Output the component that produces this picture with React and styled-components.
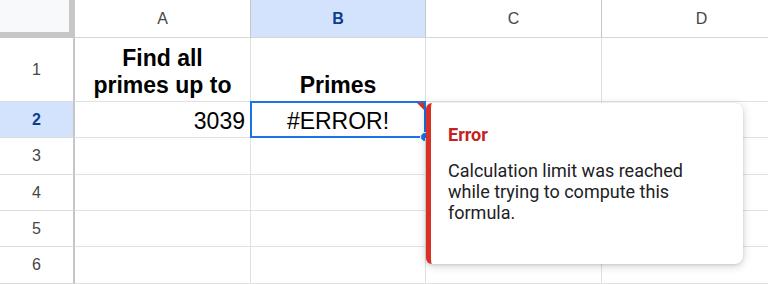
import React from 'react';
import styled, { createGlobalStyle } from 'styled-components';

const GlobalStyle = createGlobalStyle`
  html, body {
    margin: 0;
    padding: 0;
    background: #ffffff;
    overflow: hidden;
  }
`;

const Sheet = styled.div`
  position: relative;
  display: grid;
  grid-template-columns: 75px 176px 175px 176px 200px;
  grid-template-rows: 38px 64px 36px 37px 36px 36px 37px;
  width: 802px;
  font-family: "Liberation Sans", Arial, sans-serif;
`;

const Corner = styled.div`
  box-sizing: border-box;
  background: #f8f9fa;
  border-right: 6px solid #c7c7c7;
  border-bottom: 6px solid #c7c7c7;
`;

const ColHead = styled.div`
  box-sizing: border-box;
  display: flex;
  align-items: center;
  justify-content: center;
  font-size: 16px;
  color: ${p => (p.$active ? '#0b3d91' : '#444746')};
  font-weight: ${p => (p.$active ? 700 : 400)};
  background: ${p => (p.$active ? '#d3e3fd' : '#ffffff')};
  border-right: 1px solid #c4c7c5;
  border-bottom: 1px solid #d5d7d6;
`;

const RowHead = styled(ColHead)`
  border-right: 2px solid #c4c7c5;
  border-bottom: 1px solid #dcdcdc;
`;

const Cell = styled.div`
  position: relative;
  box-sizing: border-box;
  display: flex;
  align-items: flex-end;
  justify-content: ${p => (p.$align === 'right' ? 'flex-end' : 'center')};
  text-align: ${p => p.$align || 'center'};
  padding: 0 5px 2px;
  font-size: 23px;
  line-height: 27px;
  color: #000;
  font-weight: ${p => (p.$bold ? 700 : 400)};
  border-right: 1px solid #e1e1e1;
  border-bottom: 1px solid #e1e1e1;
`;

const SelectedCell = styled(Cell)`
  margin: -1px 0 0 -1px;
  border: 2px solid #1a73e8;
  padding-bottom: 1px;
`;

const ErrorMark = styled.span`
  position: absolute;
  top: 0;
  right: 0;
  width: 0;
  height: 0;
  border-top: 7px solid #d93025;
  border-left: 7px solid transparent;
`;

const FillHandle = styled.span`
  position: absolute;
  right: -6px;
  bottom: -6px;
  width: 8px;
  height: 8px;
  border-radius: 50%;
  background: #1a73e8;
  border: 1px solid #ffffff;
`;

const Popup = styled.div`
  position: absolute;
  left: 426px;
  top: 103px;
  width: 317px;
  height: 161px;
  box-sizing: border-box;
  padding: 21px 30px 0 17px;
  background: #ffffff;
  border-left: 5px solid #d93025;
  border-radius: 6px 8px 8px 6px;
  box-shadow: 0 2px 10px rgba(0, 0, 0, 0.18), 0 1px 3px rgba(0, 0, 0, 0.1);
  font-family: Roboto, "Noto Sans", sans-serif;
  z-index: 2;
`;

const PopupTitle = styled.div`
  font-size: 18px;
  line-height: 21px;
  font-weight: 700;
  color: #c5221f;
`;

const PopupText = styled.div`
  margin-top: 15px;
  font-size: 18px;
  line-height: 21px;
  color: #202124;
`;

const columns = ['A', 'B', 'C', 'D'];

export default function App() {
  return (
    <>
      <GlobalStyle />
      <Sheet>
        <Corner />
        {columns.map(c => (
          <ColHead key={c} $active={c === 'B'}>{c}</ColHead>
        ))}

        <RowHead>1</RowHead>
        <Cell $bold>Find all<br />primes up to</Cell>
        <Cell $bold>Primes</Cell>
        <Cell />
        <Cell />

        <RowHead $active>2</RowHead>
        <Cell $align="right">3039</Cell>
        <SelectedCell>
          #ERROR!
          <ErrorMark />
          <FillHandle />
        </SelectedCell>
        <Cell />
        <Cell />

        {[3, 4, 5, 6].map(n => (
          <React.Fragment key={n}>
            <RowHead>{n}</RowHead>
            <Cell />
            <Cell />
            <Cell />
            <Cell />
          </React.Fragment>
        ))}

        <Popup>
          <PopupTitle>Error</PopupTitle>
          <PopupText>
            Calculation limit was reached while trying to compute this formula.
          </PopupText>
        </Popup>
      </Sheet>
    </>
  );
}
